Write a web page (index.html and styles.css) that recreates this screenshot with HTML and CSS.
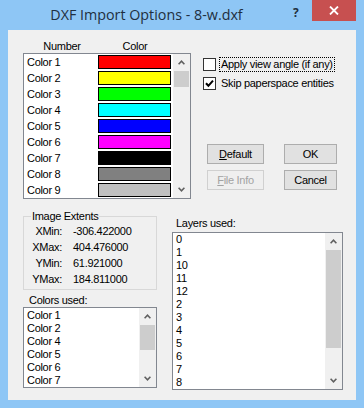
FILE: index.html
```html
<!DOCTYPE html>
<html>
<head>
<meta charset="utf-8">
<link rel="stylesheet" href="styles.css">
</head>
<body>
<div class="window">
  <div class="titlebar">
    <div class="title">DXF Import Options - 8-w.dxf</div>
    <div class="help">?</div>
    <div class="close">
      <svg width="10" height="9" viewBox="0 0 10 9"><path d="M1 0.5 L9 8.5 M9 0.5 L1 8.5" stroke="#fff" stroke-width="1.8" fill="none"/></svg>
    </div>
  </div>
  <div class="client">
    <div class="top">
      <div class="colors">
        <div class="colhead"><span class="h-num">Number</span><span class="h-col">Color</span></div>
        <div class="listbox colorlist">
          <div class="items">
            <div class="crow"><span class="cname">Color 1</span><span class="sw c1"></span></div>
            <div class="crow"><span class="cname">Color 2</span><span class="sw c2"></span></div>
            <div class="crow"><span class="cname">Color 3</span><span class="sw c3"></span></div>
            <div class="crow"><span class="cname">Color 4</span><span class="sw c4"></span></div>
            <div class="crow"><span class="cname">Color 5</span><span class="sw c5"></span></div>
            <div class="crow"><span class="cname">Color 6</span><span class="sw c6"></span></div>
            <div class="crow"><span class="cname">Color 7</span><span class="sw c7"></span></div>
            <div class="crow"><span class="cname">Color 8</span><span class="sw c8"></span></div>
            <div class="crow"><span class="cname">Color 9</span><span class="sw c9"></span></div>
          </div>
          <div class="sbar">
            <div class="sbtn"><svg width="7" height="5" viewBox="0 0 7 5"><polyline points="0.6,4.2 3.5,1.2 6.4,4.2" fill="none" stroke="#606060" stroke-width="1.6"/></svg></div>
            <div class="thumb t-colors"></div>
            <div class="track"></div>
            <div class="sbtn"><svg width="7" height="5" viewBox="0 0 7 5"><polyline points="0.6,0.8 3.5,3.8 6.4,0.8" fill="none" stroke="#606060" stroke-width="1.6"/></svg></div>
          </div>
        </div>
      </div>
      <div class="side">
        <div class="chk first"><span class="box"></span><span class="lbl focus">Apply view angle (if any)</span></div>
        <div class="chk"><span class="box"><svg width="11" height="11" viewBox="0 0 11 11"><path d="M2 5.2 L4.4 7.8 L9 2.6" fill="none" stroke="#000" stroke-width="2"/></svg></span><span class="lbl">Skip paperspace entities</span></div>
        <div class="btns">
          <div class="btn wide"><u>D</u>efault</div>
          <div class="btn narrow">OK</div>
          <div class="btn wide disabled"><u>F</u>ile Info</div>
          <div class="btn narrow">Cancel</div>
        </div>
      </div>
    </div>
    <div class="bottom">
      <div class="left">
        <fieldset class="extents">
          <legend>Image Extents</legend>
          <div class="ext-row"><span class="ext-k">XMin:</span><span class="ext-v">-306.422000</span></div>
          <div class="ext-row"><span class="ext-k">XMax:</span><span class="ext-v">404.476000</span></div>
          <div class="ext-row"><span class="ext-k">YMin:</span><span class="ext-v">61.921000</span></div>
          <div class="ext-row"><span class="ext-k">YMax:</span><span class="ext-v">184.811000</span></div>
        </fieldset>
        <div class="sub-label cu-label">Colors used:</div>
        <div class="listbox colorsused">
          <div class="items pad">
            <div class="lrow">Color 1</div>
            <div class="lrow">Color 2</div>
            <div class="lrow">Color 4</div>
            <div class="lrow">Color 5</div>
            <div class="lrow">Color 6</div>
            <div class="lrow">Color 7</div>
          </div>
          <div class="sbar">
            <div class="sbtn"><svg width="7" height="5" viewBox="0 0 7 5"><polyline points="0.6,4.2 3.5,1.2 6.4,4.2" fill="none" stroke="#606060" stroke-width="1.6"/></svg></div>
            <div class="thumb t-used"></div>
            <div class="track"></div>
            <div class="sbtn"><svg width="7" height="5" viewBox="0 0 7 5"><polyline points="0.6,0.8 3.5,3.8 6.4,0.8" fill="none" stroke="#606060" stroke-width="1.6"/></svg></div>
          </div>
        </div>
      </div>
      <div class="right">
        <div class="sub-label lu-label">Layers used:</div>
        <div class="listbox layers">
          <div class="items">
            <div class="lrow">0</div>
            <div class="lrow">1</div>
            <div class="lrow">10</div>
            <div class="lrow">11</div>
            <div class="lrow">12</div>
            <div class="lrow">2</div>
            <div class="lrow">3</div>
            <div class="lrow">4</div>
            <div class="lrow">5</div>
            <div class="lrow">6</div>
            <div class="lrow">7</div>
            <div class="lrow">8</div>
          </div>
          <div class="sbar">
            <div class="sbtn"><svg width="7" height="5" viewBox="0 0 7 5"><polyline points="0.6,4.2 3.5,1.2 6.4,4.2" fill="none" stroke="#606060" stroke-width="1.6"/></svg></div>
            <div class="thumb t-layers"></div>
            <div class="track"></div>
            <div class="sbtn"><svg width="7" height="5" viewBox="0 0 7 5"><polyline points="0.6,0.8 3.5,3.8 6.4,0.8" fill="none" stroke="#606060" stroke-width="1.6"/></svg></div>
          </div>
        </div>
      </div>
    </div>
  </div>
</div>
</body>
</html>
```
FILE: styles.css
```css
* { box-sizing: border-box; }
html, body { margin: 0; padding: 0; }
body {
  width: 364px;
  height: 408px;
  overflow: hidden;
  background: #8ec6f5;
  font-family: "Liberation Sans", Arial, sans-serif;
  font-size: 11px;
  letter-spacing: -0.3px;
  color: #000;
}
.window { width: 364px; height: 408px; }
.titlebar { display: flex; height: 30px; }
.title {
  width: 293px;
  text-align: center;
  font-family: "Open Sans", sans-serif;
  font-size: 14.3px;
  letter-spacing: 0;
  line-height: 30px;
  color: #1f2f40;
}
.help {
  width: 19px;
  font-family: "Open Sans", sans-serif;
  font-weight: bold;
  font-size: 12px;
  letter-spacing: 0;
  line-height: 26px;
  color: #1f2f40;
}
.close {
  width: 44px;
  height: 21px;
  background: #c75050;
  display: flex;
  align-items: center;
  justify-content: center;
}
.client {
  margin: 0 8px;
  height: 370px;
  background: #f0f0f0;
}

/* top section */
.top { display: flex; padding: 9px 0 0 15px; }
.colors { width: 168px; }
.colhead { display: flex; height: 14px; line-height: 14px; }
.h-num { width: 78px; text-align: center; }
.h-col { width: 68px; text-align: center; }

.listbox {
  display: flex;
  border: 1px solid #828790;
  background: #fff;
}
.items { flex: 1; overflow: hidden; }
.items.pad { padding-top: 1px; }
.colorlist { height: 146px; }
.crow { display: flex; align-items: center; height: 16px; padding-left: 3px; }
.cname { width: 71px; }
.sw { width: 73px; height: 14px; border: 1px solid #000; }
.c1 { background: #ff0000; }
.c2 { background: #ffff00; }
.c3 { background: #00ff00; }
.c4 { background: #00ffff; }
.c5 { background: #0000ff; }
.c6 { background: #ff00ff; }
.c7 { background: #000000; }
.c8 { background: #808080; }
.c9 { background: #c0c0c0; }

.sbar {
  width: 17px;
  display: flex;
  flex-direction: column;
  background: #f0f0f0;
}
.sbtn { height: 17px; display: flex; align-items: center; justify-content: center; }
.sbtn svg { display: block; }
.thumb { background: #cdcdcd; margin: 0 1px; }
.t-colors { height: 16px; }
.t-used { height: 25px; }
.t-layers { height: 98px; }
.track { flex: 1; }

.side { margin-left: 12px; padding-top: 19px; }
.chk { display: flex; align-items: center; height: 15px; margin-top: -1px; }
.chk.first { margin-bottom: 5px; }
.box {
  width: 13px;
  height: 13px;
  border: 1px solid #333;
  background: #fff;
  display: flex;
  align-items: center;
  justify-content: center;
}
.box svg { display: block; }
.lbl {
  margin-left: 3px;
  height: 15px;
  line-height: 13px;
  padding: 0 1px;
  border: 1px dotted transparent;
}
.lbl.focus { border-color: #000; }

.btns {
  display: grid;
  grid-template-columns: 57px 53px;
  column-gap: 20px;
  row-gap: 6px;
  margin: 53px 0 0 4px;
}
.btn {
  height: 20px;
  line-height: 18px;
  text-align: center;
  border: 1px solid #adadad;
  background: #e1e1e1;
}
.btn.disabled {
  color: #a3a3a3;
  border-color: #d0d0d0;
  background: #efefef;
}

/* bottom section */
.bottom { display: flex; margin-top: 10px; padding-left: 15px; }
.left { width: 134px; }
.extents {
  margin: 0;
  padding: 0 0 2px 0;
  border: 1px solid #d8d8d8;
  min-width: 0;
}
.extents legend {
  margin-left: 7px;
  padding: 0 1px;
  line-height: 14px;
}
.ext-row { display: flex; height: 16px; line-height: 16px; }
.ext-k { width: 38px; text-align: right; }
.ext-v { margin-left: 11px; }

.sub-label { line-height: 14px; }
.cu-label { margin: 3px 0 0 6px; }
.colorsused { height: 81px; }
.lrow { height: 13px; line-height: 13px; padding-left: 3px; }

.right { margin-left: 15px; width: 171px; }
.lu-label { margin: 7px 0 0 4px; }
.layers { height: 158px; margin-top: 2px; }
```
